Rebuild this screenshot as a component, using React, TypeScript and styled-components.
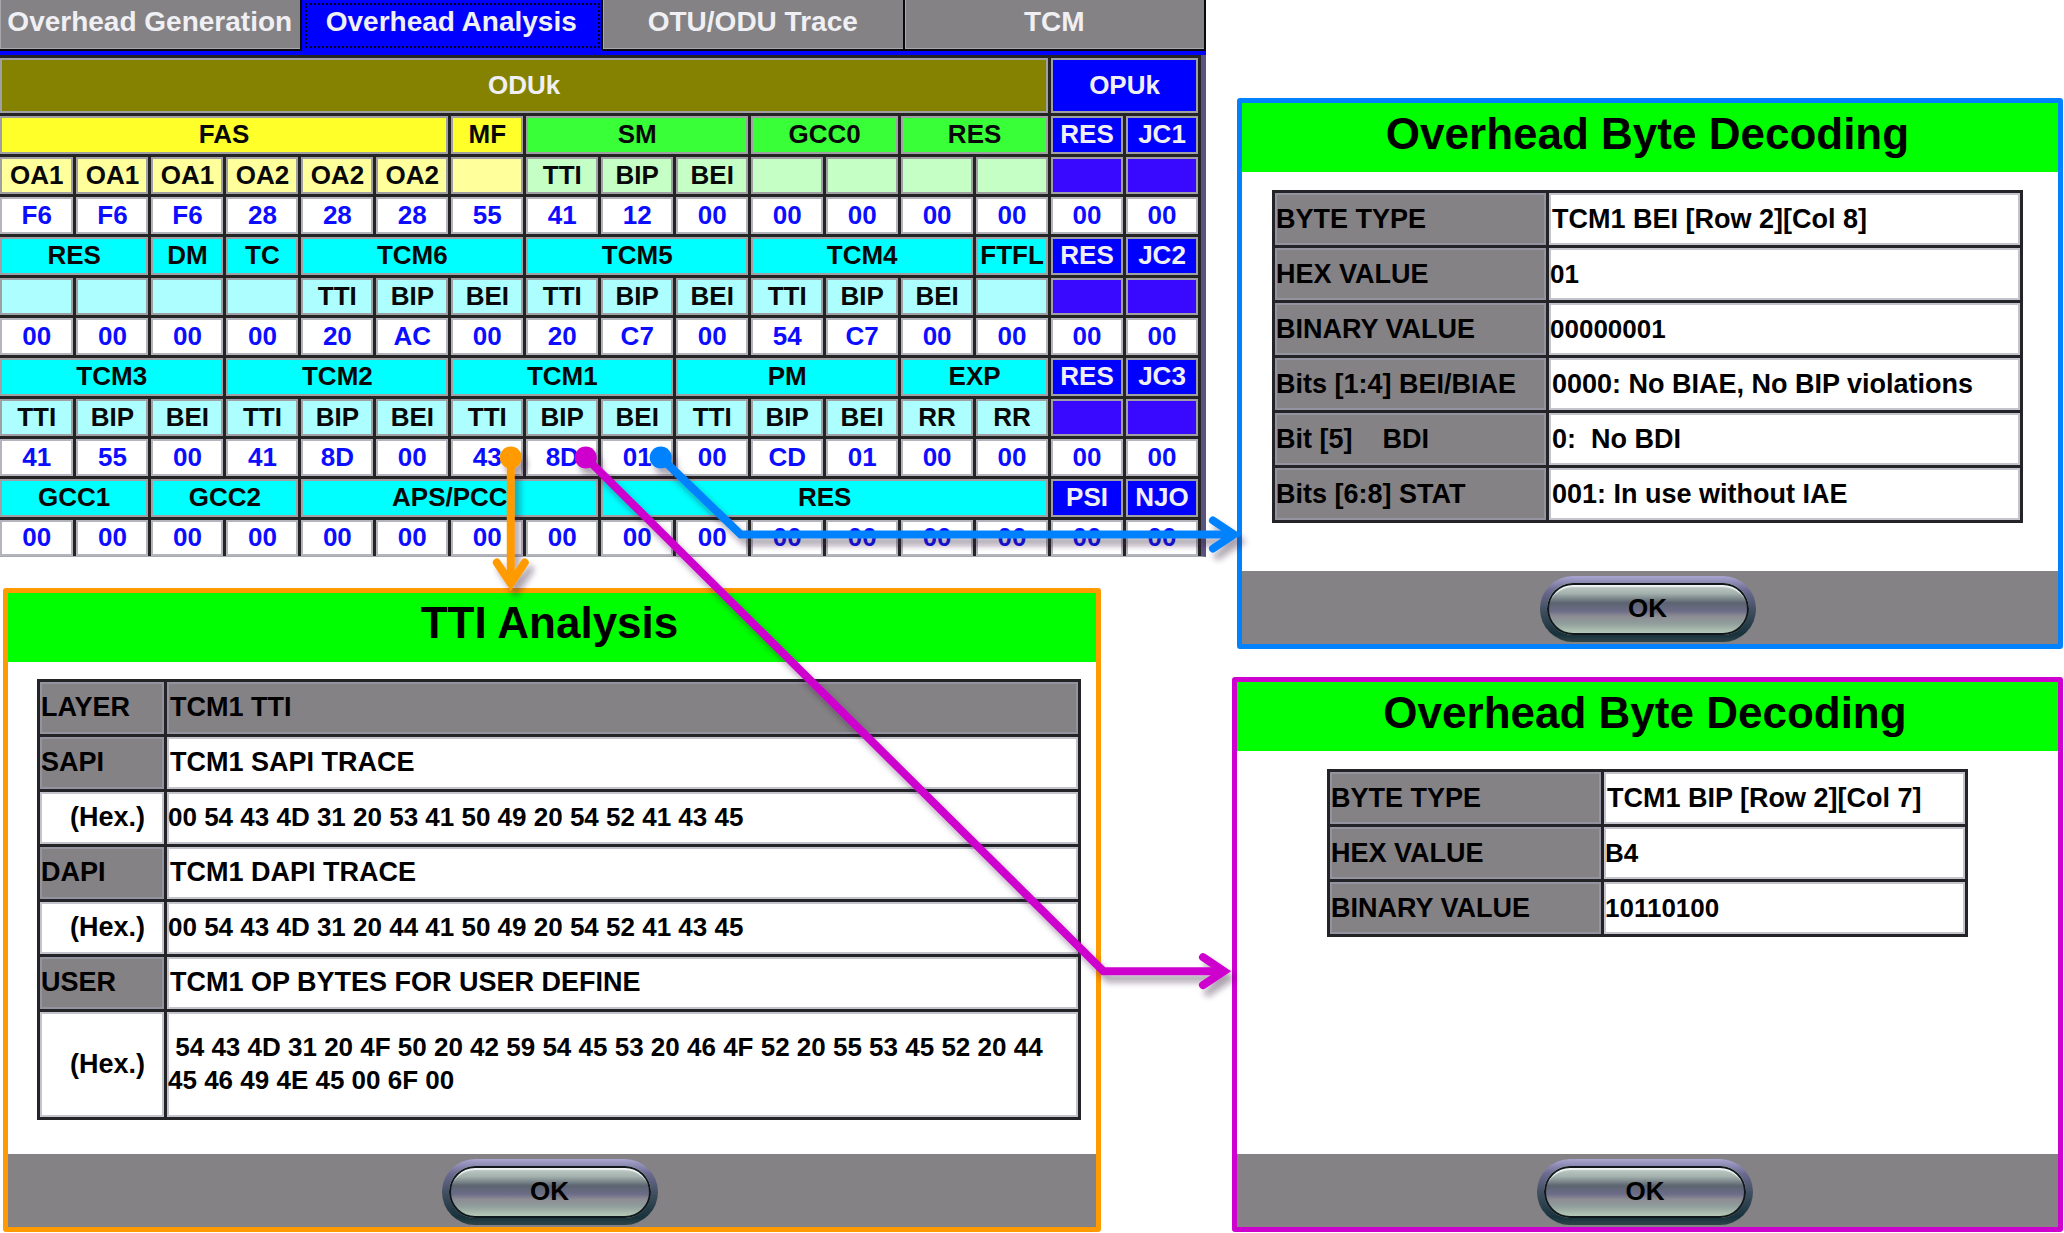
import React, { useLayoutEffect, useRef, useState } from 'react';
import styled, { createGlobalStyle, css } from 'styled-components';

const GlobalStyle = createGlobalStyle`
  * { box-sizing: border-box; }
  body {
    margin: 0;
    background: #ffffff;
    color: #000000;
    font-family: "Liberation Sans", Arial, sans-serif;
  }
`;

const Page = styled.main`
  position: relative;
  display: grid;
  grid-template-columns: 1206fr 831fr;
  column-gap: 26px;
  min-height: 100vh;
  padding: 0 1px 1px 0;
`;

const LeftColumn = styled.div`
  display: flex;
  flex-direction: column;
  gap: 31px;
  min-width: 0;
`;

const RightColumn = styled.div`
  display: flex;
  flex-direction: column;
  gap: 28px;
  min-width: 0;
  padding-top: 98px;
`;

/* ---------- tabs ---------- */

const TabBar = styled.nav`
  display: grid;
  grid-template-columns: repeat(4, 1fr);
  padding-bottom: 4px;
  background: #0000ff;
`;

const Tab = styled.button<{ $active?: boolean }>`
  height: 51px;
  margin: 0;
  padding: 0 0 6px;
  border: 0 solid #080810;
  border-width: 0 2px 2px 0;
  background: #848284;
  color: #f0f0f4;
  box-shadow: inset 1px -1px 0 #a8a8ac;
  font: bold 28px/32px "Liberation Sans", Arial, sans-serif;
  white-space: nowrap;
  ${(p) =>
    p.$active &&
    css`
      border-bottom-color: #0000ff;
      background: #0000ff;
      box-shadow: none;
      outline: 2px dotted #000020;
      outline-offset: -5px;
    `}
`;

/* ---------- overhead byte map ---------- */

type Tone =
  | 'olive' | 'blue' | 'yellow' | 'green' | 'cyan'
  | 'paleYellow' | 'paleGreen' | 'paleCyan' | 'violet' | 'value';

const tones: Record<Tone, { bg: string; fg: string }> = {
  olive: { bg: '#848200', fg: '#f0f0f4' },
  blue: { bg: '#0000ff', fg: '#f0f0f4' },
  yellow: { bg: '#ffff29', fg: '#080808' },
  green: { bg: '#39ff39', fg: '#080808' },
  cyan: { bg: '#00ffff', fg: '#080808' },
  paleYellow: { bg: '#ffff9c', fg: '#080808' },
  paleGreen: { bg: '#c6ffc6', fg: '#080808' },
  paleCyan: { bg: '#adffff', fg: '#080808' },
  violet: { bg: '#3908ff', fg: '#ffffff' },
  value: { bg: '#ffffff', fg: '#0c0cff' },
};

const MapFrame = styled.div`
  border-right: 5px solid #5c5480;
  border-bottom: 1px solid #a8a8b0;
`;

const ByteTable = styled.table`
  width: 100%;
  table-layout: fixed;
  border-collapse: collapse;
  border-top: 3px solid #242424;
  border-right: 2px solid #242424;
`;

const ByteRow = styled.tr<{ $height: number }>`
  height: ${(p) => p.$height}px;
`;

const ByteCell = styled.td<{ $tone: Tone }>`
  padding: 0 0 2px;
  border: 3px solid #242424;
  background: ${(p) => tones[p.$tone].bg};
  color: ${(p) => tones[p.$tone].fg};
  box-shadow: inset 0 0 0 2px ${(p) => (p.$tone === 'value' ? '#b4b4bc' : '#a0a0a4')};
  font-size: 26px;
  font-weight: bold;
  line-height: 30px;
  text-align: center;
  white-space: nowrap;
  &:first-child { border-left: 0; }
  tr:last-child > & { border-bottom: 0; }
`;

type CellSpec = { text: string; tone: Tone; span?: number; anchor?: string };
type RowSpec = { height: number; cells: CellSpec[] };

const c = (text: string, tone: Tone, span = 1, anchor?: string): CellSpec => ({ text, tone, span, anchor });
const each = (texts: string[], tone: Tone) => texts.map((t) => c(t, tone));
const values = (line: string, anchors: Record<number, string> = {}) =>
  line.split(' ').map((t, i) => c(t, 'value', 1, anchors[i]));
const violets = each(['', ''], 'violet');

const rows: RowSpec[] = [
  { height: 58, cells: [c('ODUk', 'olive', 14), c('OPUk', 'blue', 2)] },
  {
    height: 41,
    cells: [
      c('FAS', 'yellow', 6), c('MF', 'yellow'), c('SM', 'green', 3), c('GCC0', 'green', 2),
      c('RES', 'green', 2), c('RES', 'blue'), c('JC1', 'blue'),
    ],
  },
  {
    height: 40,
    cells: [
      ...each(['OA1', 'OA1', 'OA1', 'OA2', 'OA2', 'OA2', ''], 'paleYellow'),
      ...each(['TTI', 'BIP', 'BEI', '', '', '', ''], 'paleGreen'),
      ...violets,
    ],
  },
  { height: 40, cells: values('F6 F6 F6 28 28 28 55 41 12 00 00 00 00 00 00 00') },
  {
    height: 41,
    cells: [
      c('RES', 'cyan', 2), c('DM', 'cyan'), c('TC', 'cyan'), c('TCM6', 'cyan', 3), c('TCM5', 'cyan', 3),
      c('TCM4', 'cyan', 3), c('FTFL', 'cyan'), c('RES', 'blue'), c('JC2', 'blue'),
    ],
  },
  {
    height: 40,
    cells: [
      ...each(['', '', '', '', 'TTI', 'BIP', 'BEI', 'TTI', 'BIP', 'BEI', 'TTI', 'BIP', 'BEI', ''], 'paleCyan'),
      ...violets,
    ],
  },
  { height: 40, cells: values('00 00 00 00 20 AC 00 20 C7 00 54 C7 00 00 00 00') },
  {
    height: 41,
    cells: [
      c('TCM3', 'cyan', 3), c('TCM2', 'cyan', 3), c('TCM1', 'cyan', 3), c('PM', 'cyan', 3),
      c('EXP', 'cyan', 2), c('RES', 'blue'), c('JC3', 'blue'),
    ],
  },
  {
    height: 40,
    cells: [
      ...each(['TTI', 'BIP', 'BEI', 'TTI', 'BIP', 'BEI', 'TTI', 'BIP', 'BEI', 'TTI', 'BIP', 'BEI', 'RR', 'RR'], 'paleCyan'),
      ...violets,
    ],
  },
  {
    height: 40,
    cells: values('41 55 00 41 8D 00 43 8D 01 00 CD 01 00 00 00 00', { 6: 'tti', 7: 'bip', 8: 'bei' }),
  },
  {
    height: 41,
    cells: [
      c('GCC1', 'cyan', 2), c('GCC2', 'cyan', 2), c('APS/PCC', 'cyan', 4), c('RES', 'cyan', 6),
      c('PSI', 'blue'), c('NJO', 'blue'),
    ],
  },
  { height: 37, cells: values('00 00 00 00 00 00 00 00 00 00 00 00 00 00 00 00') },
];

/* ---------- dialogs ---------- */

const Dialog = styled.section<{ $color: string; $margin?: string; $grow?: boolean }>`
  display: flex;
  flex-direction: column;
  flex: ${(p) => (p.$grow ? '1 0 auto' : '0 0 auto')};
  margin: ${(p) => p.$margin ?? '0'};
  border: 5px solid ${(p) => p.$color};
  border-radius: 3px;
`;

const DialogTitle = styled.h2`
  display: flex;
  align-items: center;
  justify-content: center;
  height: 69px;
  margin: 0;
  padding: 0 5px 8px 0;
  background: #00ff00;
  font-size: 44px;
  line-height: 50px;
  white-space: nowrap;
`;

const DialogBody = styled.div<{ $padding: string }>`
  flex: 1;
  padding: ${(p) => p.$padding};
`;

const DialogFooter = styled.footer`
  display: flex;
  justify-content: center;
  align-items: flex-start;
  height: 73px;
  padding: 5px 5px 0 0;
  background: #848284;
`;

const OkButton = styled.button`
  width: 216px;
  height: 66px;
  margin: 0;
  padding: 0 0 2px;
  border: 7px solid transparent;
  border-radius: 33px;
  background:
    linear-gradient(#c8d4d0 0%, #a4b2ae 20%, #5c6470 38%, #6c6c88 54%, #8c8c94 64%, #909e9c 78%, #b8ccb8 97%) padding-box,
    linear-gradient(#a8a6d0 0%, #6c6a90 22%, #3c4c5c 55%, #18323c 88%, #2c4448 100%) border-box;
  box-shadow: inset 0 0 0 2px #10181c, inset 0 4px 1px #f0f4f4;
  color: #000000;
  font: bold 26px/30px "Liberation Sans", Arial, sans-serif;
`;

const DetailTable = styled.table`
  width: 100%;
  table-layout: fixed;
  border-collapse: collapse;
`;

const detailCell = css`
  height: 55px;
  border: 3px solid #242428;
  font-weight: bold;
  text-align: left;
  line-height: 33px;
  white-space: pre-wrap;
`;

const LabelCell = styled.th<{ $width: number; $indent?: boolean }>`
  ${detailCell}
  width: ${(p) => p.$width}px;
  padding: 0 0 0 ${(p) => (p.$indent ? 30 : 1)}px;
  background: ${(p) => (p.$indent ? '#ffffff' : '#848284')};
  box-shadow: inset 0 0 0 2px ${(p) => (p.$indent ? '#c4c4cc' : '#9494a0')};
  font-size: 27px;
`;

const ValueCell = styled.td<{ $data?: boolean; $shaded?: boolean; $tall?: boolean }>`
  ${detailCell}
  ${(p) => p.$tall && 'height: 108px;'}
  padding: 0 0 0 ${(p) => (p.$data ? 1 : 3)}px;
  background: ${(p) => (p.$shaded ? '#848284' : '#ffffff')};
  box-shadow: inset 0 0 0 2px ${(p) => (p.$shaded ? '#9494a0' : '#c4c4cc')};
  font-size: ${(p) => (p.$data ? 26 : 27)}px;
`;

type Detail = { label: string; value: string; data?: boolean; shaded?: boolean; indent?: boolean; tall?: boolean };

const ttiDetails: Detail[] = [
  { label: 'LAYER', value: 'TCM1 TTI', shaded: true },
  { label: 'SAPI', value: 'TCM1 SAPI TRACE' },
  { label: '(Hex.)', value: '00 54 43 4D 31 20 53 41 50 49 20 54 52 41 43 45', indent: true, data: true },
  { label: 'DAPI', value: 'TCM1 DAPI TRACE' },
  { label: '(Hex.)', value: '00 54 43 4D 31 20 44 41 50 49 20 54 52 41 43 45', indent: true, data: true },
  { label: 'USER', value: 'TCM1 OP BYTES FOR USER DEFINE' },
  {
    label: '(Hex.)',
    value: ' 54 43 4D 31 20 4F 50 20 42 59 54 45 53 20 46 4F 52 20 55 53 45 52 20 44\n45 46 49 4E 45 00 6F 00',
    indent: true,
    data: true,
    tall: true,
  },
];

const beiDetails: Detail[] = [
  { label: 'BYTE TYPE', value: 'TCM1 BEI [Row 2][Col 8]' },
  { label: 'HEX VALUE', value: '01', data: true },
  { label: 'BINARY VALUE', value: '00000001', data: true },
  { label: 'Bits [1:4] BEI/BIAE', value: '0000: No BIAE, No BIP violations' },
  { label: 'Bit [5]    BDI', value: '0:  No BDI' },
  { label: 'Bits [6:8] STAT', value: '001: In use without IAE' },
];

const bipDetails: Detail[] = [
  { label: 'BYTE TYPE', value: 'TCM1 BIP [Row 2][Col 7]' },
  { label: 'HEX VALUE', value: 'B4', data: true },
  { label: 'BINARY VALUE', value: '10110100', data: true },
];

type DialogProps = {
  name: string;
  title: string;
  color: string;
  details: Detail[];
  labelWidth: number;
  padding: string;
  margin?: string;
  grow?: boolean;
};

function DetailDialog({ name, title, color, details, labelWidth, padding, margin, grow }: DialogProps) {
  return (
    <Dialog $color={color} $margin={margin} $grow={grow} data-anchor={name} aria-label={title}>
      <DialogTitle>{title}</DialogTitle>
      <DialogBody $padding={padding}>
        <DetailTable>
          <tbody>
            {details.map((d, i) => (
              <tr key={i}>
                <LabelCell scope="row" $width={labelWidth} $indent={d.indent}>{d.label}</LabelCell>
                <ValueCell $data={d.data} $shaded={d.shaded} $tall={d.tall}>{d.value}</ValueCell>
              </tr>
            ))}
          </tbody>
        </DetailTable>
      </DialogBody>
      <DialogFooter>
        <OkButton type="button">OK</OkButton>
      </DialogFooter>
    </Dialog>
  );
}

/* ---------- connectors from a byte to its dialog ---------- */

const ORANGE = '#ff9a00';
const MAGENTA = '#ce00ce';
const AZURE = '#0082ff';

const Overlay = styled.svg`
  position: absolute;
  inset: 0;
  width: 100%;
  height: 100%;
  pointer-events: none;
`;

type Connector = { color: string; x: number; y: number; line: string; head: string };

function rightHead(x: number, y: number) {
  return `M${x - 21} ${y - 14}L${x} ${y}L${x - 21} ${y + 14}`;
}

function measure(root: HTMLElement): Connector[] {
  const base = root.getBoundingClientRect();
  const box = (name: string) => {
    const r = root.querySelector(`[data-anchor="${name}"]`)!.getBoundingClientRect();
    return { left: r.left - base.left, right: r.right - base.left, top: r.top - base.top, height: r.height };
  };
  const start = (name: string) => {
    const b = box(name);
    return { x: b.right - 14, y: b.top + b.height / 2 };
  };
  const tti = start('tti');
  const bip = start('bip');
  const bei = start('bei');
  const ttiTip = box('ttiDialog').top - 4;
  const bipBox = box('bipDialog');
  const beiBox = box('beiDialog');
  const bipY = bipBox.top + bipBox.height * 0.53;
  const beiY = bei.y + 77;
  return [
    {
      color: ORANGE, ...tti,
      line: `M${tti.x} ${tti.y}V${ttiTip}`,
      head: `M${tti.x - 14} ${ttiTip - 21}L${tti.x} ${ttiTip}L${tti.x + 14} ${ttiTip - 21}`,
    },
    {
      color: AZURE, ...bei,
      line: `M${bei.x} ${bei.y}L${bei.x + 80} ${beiY}H${beiBox.left - 3}`,
      head: rightHead(beiBox.left - 3, beiY),
    },
    {
      color: MAGENTA, ...bip,
      line: `M${bip.x} ${bip.y}L${bip.x + bipY - bip.y + 4} ${bipY}H${bipBox.left - 8}`,
      head: rightHead(bipBox.left - 8, bipY),
    },
  ];
}

export default function App() {
  const pageRef = useRef<HTMLElement>(null);
  const [connectors, setConnectors] = useState<Connector[]>([]);

  useLayoutEffect(() => {
    const update = () => pageRef.current && setConnectors(measure(pageRef.current));
    update();
    window.addEventListener('resize', update);
    return () => window.removeEventListener('resize', update);
  }, []);

  return (
    <Page ref={pageRef}>
      <GlobalStyle />
      <LeftColumn>
        <div>
          <TabBar>
            <Tab type="button">Overhead Generation</Tab>
            <Tab type="button" $active aria-current="page">Overhead Analysis</Tab>
            <Tab type="button">OTU/ODU Trace</Tab>
            <Tab type="button">TCM</Tab>
          </TabBar>
          <MapFrame>
            <ByteTable>
              <colgroup>
                {Array.from({ length: 16 }, (_, i) => <col key={i} />)}
              </colgroup>
              <tbody>
                {rows.map((row, r) => (
                  <ByteRow key={r} $height={row.height}>
                    {row.cells.map((cell, i) => (
                      <ByteCell key={i} colSpan={cell.span} $tone={cell.tone} data-anchor={cell.anchor}>
                        {cell.text}
                      </ByteCell>
                    ))}
                  </ByteRow>
                ))}
              </tbody>
            </ByteTable>
          </MapFrame>
        </div>
        <DetailDialog
          name="ttiDialog" title="TTI Analysis" color={ORANGE} details={ttiDetails}
          labelWidth={127} padding="17px 15px 30px 29px" margin="0 105px 0 3px" grow
        />
      </LeftColumn>
      <RightColumn>
        <DetailDialog
          name="beiDialog" title="Overhead Byte Decoding" color={AZURE} details={beiDetails}
          labelWidth={274} padding="18px 35px 48px 30px" margin="0 0 0 5px"
        />
        <DetailDialog
          name="bipDialog" title="Overhead Byte Decoding" color={MAGENTA} details={bipDetails}
          labelWidth={274} padding="18px 90px" grow
        />
      </RightColumn>
      <Overlay aria-hidden="true">
        <defs>
          <filter id="lineShadow" filterUnits="userSpaceOnUse" x="0" y="0" width="100%" height="100%">
            <feDropShadow dx="5" dy="7" stdDeviation="3" floodColor="#301838" floodOpacity="0.4" />
          </filter>
        </defs>
        {connectors.map((k) => (
          <g key={k.color} filter="url(#lineShadow)" fill="none" stroke={k.color} strokeWidth={8}>
            <path d={k.line} />
            <path d={k.head} strokeLinecap="round" strokeLinejoin="miter" />
            <circle cx={k.x} cy={k.y} r={11} fill={k.color} stroke="none" />
          </g>
        ))}
      </Overlay>
    </Page>
  );
}
